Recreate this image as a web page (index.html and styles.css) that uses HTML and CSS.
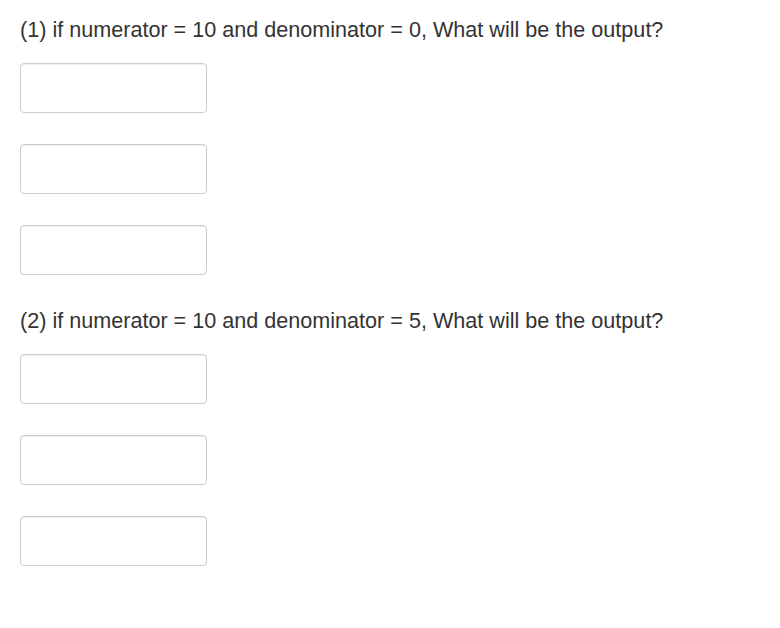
FILE: index.html
```html
<!DOCTYPE html>
<html>
<head>
<meta charset="utf-8">
<link rel="stylesheet" href="styles.css">
</head>
<body>
<div class="page">
  <section class="question">
    <p class="q-text">(1) if numerator = 10 and denominator = 0, What will be the output?</p>
    <input class="answer" type="text">
    <input class="answer" type="text">
    <input class="answer" type="text">
  </section>
  <section class="question">
    <p class="q-text">(2) if numerator = 10 and denominator = 5, What will be the output?</p>
    <input class="answer" type="text">
    <input class="answer" type="text">
    <input class="answer" type="text">
  </section>
</div>
</body>
</html>
```
FILE: styles.css
```css
html, body {
  margin: 0;
  padding: 0;
  background: #fff;
}
.page {
  padding: 18px 20px 0 20px;
  font-family: "Liberation Sans", Arial, sans-serif;
  color: #333;
}
.question {
  display: flex;
  flex-direction: column;
  align-items: flex-start;
  gap: 31px;
  margin-bottom: 34px;
}
.q-text {
  margin: 0 0 -10px 0;
  font-size: 21.6px;
  line-height: 24px;
  white-space: nowrap;
}
.answer {
  box-sizing: border-box;
  width: 187px;
  height: 50px;
  margin: 0;
  border: 1px solid #ccc;
  border-radius: 4px;
  box-shadow: inset 0 1px 1px rgba(0,0,0,0.075);
  background: #fff;
}
```
